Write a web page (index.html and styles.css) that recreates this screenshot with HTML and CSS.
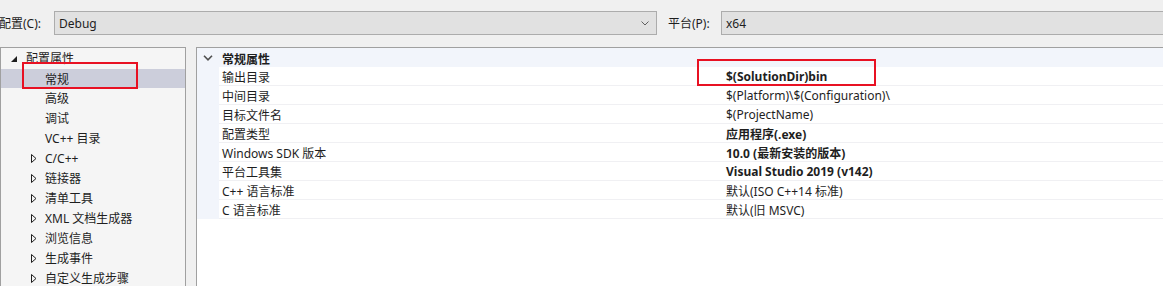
FILE: index.html
```html
<!DOCTYPE html>
<html lang="zh-CN">

<head>
  <meta charset="UTF-8">
  <title>属性页</title>
  <link rel="stylesheet" href="styles.css">
</head>

<body>
  <div class="toolbar">
    <span class="label label-config">配置(C):</span>
    <div class="combo combo-config">
      <span>Debug</span>
      <svg class="arrow" width="8" height="5" viewBox="0 0 8 5"><polyline points="0.5,0.5 4,4 7.5,0.5" fill="none" stroke="#606060" stroke-width="1"/></svg>
    </div>
    <span class="label label-platform">平台(P):</span>
    <div class="combo combo-platform"><span>x64</span></div>
  </div>

  <div class="main">
    <!-- Tree -->
    <div class="tree">
      <div class="tree-row">
        <svg class="exp" width="6" height="6" viewBox="0 0 6 6"><polygon points="6,0 6,6 0,6" fill="#1e1e1e"/></svg>
        <span>配置属性</span>
      </div>
      <div class="tree-row child selected"><span>常规</span></div>
      <div class="tree-row child"><span>高级</span></div>
      <div class="tree-row child"><span>调试</span></div>
      <div class="tree-row child"><span>VC++ 目录</span></div>
      <div class="tree-row child collapsed">
        <svg class="col" width="6" height="9" viewBox="0 0 6 9"><polygon points="0.5,0.5 5,4.5 0.5,8.5" fill="none" stroke="#1e1e1e" stroke-width="1"/></svg>
        <span>C/C++</span>
      </div>
      <div class="tree-row child collapsed">
        <svg class="col" width="6" height="9" viewBox="0 0 6 9"><polygon points="0.5,0.5 5,4.5 0.5,8.5" fill="none" stroke="#1e1e1e" stroke-width="1"/></svg>
        <span>链接器</span>
      </div>
      <div class="tree-row child collapsed">
        <svg class="col" width="6" height="9" viewBox="0 0 6 9"><polygon points="0.5,0.5 5,4.5 0.5,8.5" fill="none" stroke="#1e1e1e" stroke-width="1"/></svg>
        <span>清单工具</span>
      </div>
      <div class="tree-row child collapsed">
        <svg class="col" width="6" height="9" viewBox="0 0 6 9"><polygon points="0.5,0.5 5,4.5 0.5,8.5" fill="none" stroke="#1e1e1e" stroke-width="1"/></svg>
        <span>XML 文档生成器</span>
      </div>
      <div class="tree-row child collapsed">
        <svg class="col" width="6" height="9" viewBox="0 0 6 9"><polygon points="0.5,0.5 5,4.5 0.5,8.5" fill="none" stroke="#1e1e1e" stroke-width="1"/></svg>
        <span>浏览信息</span>
      </div>
      <div class="tree-row child collapsed">
        <svg class="col" width="6" height="9" viewBox="0 0 6 9"><polygon points="0.5,0.5 5,4.5 0.5,8.5" fill="none" stroke="#1e1e1e" stroke-width="1"/></svg>
        <span>生成事件</span>
      </div>
      <div class="tree-row child collapsed">
        <svg class="col" width="6" height="9" viewBox="0 0 6 9"><polygon points="0.5,0.5 5,4.5 0.5,8.5" fill="none" stroke="#1e1e1e" stroke-width="1"/></svg>
        <span>自定义生成步骤</span>
      </div>
    </div>

    <!-- Property grid -->
    <div class="grid">
      <div class="grid-head">
        <div class="gutter">
          <svg width="10" height="6" viewBox="0 0 10 6"><polyline points="1,0.8 5,4.8 9,0.8" fill="none" stroke="#505050" stroke-width="1.6"/></svg>
        </div>
        <span class="head-text">常规属性</span>
      </div>
      <div class="grid-row"><div class="gutter"></div><div class="name">输出目录</div><div class="value bold">$(SolutionDir)bin</div></div>
      <div class="grid-row"><div class="gutter"></div><div class="name">中间目录</div><div class="value">$(Platform)\$(Configuration)\</div></div>
      <div class="grid-row"><div class="gutter"></div><div class="name">目标文件名</div><div class="value">$(ProjectName)</div></div>
      <div class="grid-row"><div class="gutter"></div><div class="name">配置类型</div><div class="value bold">应用程序(.exe)</div></div>
      <div class="grid-row"><div class="gutter"></div><div class="name">Windows SDK 版本</div><div class="value bold">10.0 (最新安装的版本)</div></div>
      <div class="grid-row"><div class="gutter"></div><div class="name">平台工具集</div><div class="value bold">Visual Studio 2019 (v142)</div></div>
      <div class="grid-row"><div class="gutter"></div><div class="name">C++ 语言标准</div><div class="value">默认(ISO C++14 标准)</div></div>
      <div class="grid-row"><div class="gutter"></div><div class="name">C 语言标准</div><div class="value">默认(旧 MSVC)</div></div>
    </div>
  </div>

  <!-- Annotation boxes -->
  <div class="mark mark-tree"></div>
  <div class="mark mark-value"></div>
</body>

</html>
```

FILE: styles.css
```css
/* General */
body {
  margin: 0;
  background-color: #f0f0f0;
  font-family: "Noto Sans", "Noto Sans CJK SC", sans-serif;
  font-size: 12px;
  color: #1e1e1e;
  width: 1163px;
  height: 286px;
  overflow: hidden;
  position: relative;
}

/* Top toolbar */
.toolbar {
  display: flex;
  align-items: center;
  height: 47px;
}

.label {
  line-height: 16px;
  white-space: nowrap;
}

.label-config {
  width: 55px;
  margin-left: -1px;
}

.label-platform {
  width: 53px;
  margin-left: 11px;
}

.combo {
  height: 24px;
  box-sizing: border-box;
  border: 1px solid #acacac;
  background-color: #e1e1e1;
  display: flex;
  align-items: center;
  padding-left: 4px;
  margin-top: -1px;
}

.combo-config {
  width: 603px;
  justify-content: space-between;
  padding-right: 7px;
}

.combo-platform {
  flex: 1;
  margin-right: -2px;
}

/* Main area */
.main {
  display: flex;
  gap: 10px;
  height: 239px;
}

.tree {
  width: 186px;
  box-sizing: border-box;
  border: 1px solid #a0a0a0;
  border-bottom: none;
  background-color: #f5f5f5;
}

.tree-row {
  height: 20px;
  display: flex;
  align-items: center;
  padding-left: 10px;
  white-space: nowrap;
}

.tree-row .exp {
  margin-right: 9px;
  margin-top: 1px;
}

.tree-row.child {
  padding-left: 44px;
}

.tree-row.collapsed {
  padding-left: 30px;
}

.tree-row .col {
  margin-right: 8px;
}

.tree-row.selected {
  background-color: #cccedb;
  margin-top: 1px;
  height: 19px;
}

/* Property grid */
.grid {
  flex: 1;
  box-sizing: border-box;
  border: 1px solid #a0a0a0;
  border-right: none;
  border-bottom: none;
  background-color: #ffffff;
}

.grid-head {
  height: 19px;
  display: flex;
  align-items: center;
  background-color: #f2f5fb;
}

.head-text {
  font-weight: bold;
  padding-left: 3px;
  padding-top: 2px;
}

.gutter {
  width: 22px;
  align-self: stretch;
  background-color: #f2f5fb;
  display: flex;
  align-items: center;
  justify-content: center;
  flex-shrink: 0;
}

.grid-row {
  height: 19px;
  display: flex;
  align-items: stretch;
}

.grid-row .name,
.grid-row .value {
  display: flex;
  align-items: center;
  padding-top: 1px;
  border-bottom: 1px solid #f0f0f3;
  white-space: nowrap;
}

.grid-row .name {
  width: 500px;
  padding-left: 3px;
}

.grid-row .value {
  flex: 1;
  padding-left: 4px;
}

.bold {
  font-weight: bold;
}

/* Red annotation boxes */
.mark {
  position: absolute;
  border: 2px solid #e81123;
  box-sizing: border-box;
}

.mark-tree {
  left: 22px;
  top: 62px;
  width: 116px;
  height: 27px;
}

.mark-value {
  left: 697px;
  top: 59px;
  width: 179px;
  height: 27px;
}
```
